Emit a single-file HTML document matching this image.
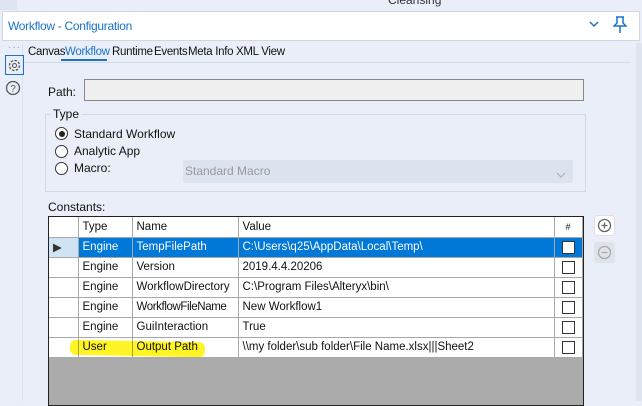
<!DOCTYPE html>
<html><head><style>
*{box-sizing:border-box}
body{margin:0;width:642px;height:401px;overflow:hidden;background:#e9eef8;font-family:"Liberation Sans",sans-serif;font-size:12px;color:#111;position:relative}
.a{position:absolute}
.title{left:2px;top:11px;width:638px;height:30px;background:#fff;border:1px solid #d0d6e2}
.tab{top:46px;font-size:11.5px;letter-spacing:-0.3px}
table{border-collapse:collapse;font-size:11.5px;table-layout:fixed}
td{border:1px solid #a8a8a8;height:20px;padding:0 0 0 4px;white-space:nowrap;overflow:hidden;background:#fff}
.sel td{background:#0078d7;color:#fff}
.cb{display:inline-block;width:13px;height:13px;border:1px solid #333;background:#fff;vertical-align:middle}
.radio{width:13px;height:13px;border:1px solid #333;border-radius:50%;background:#fff}
</style></head><body>
<div class="a" style="left:0;top:0;width:17px;height:10px;background:#dfe5f0"></div>
<div class="a" style="left:388px;top:-7px;font-size:12px;color:#333">Cleansing</div>
<div class="a title"></div>
<div class="a" style="left:8px;top:19px;font-size:12px;letter-spacing:-0.3px;color:#1a73c8">Workflow - Configuration</div>
<svg class="a" style="left:588px;top:20px" width="12" height="10"><path d="M2 2l4 4 4-4" stroke="#1a73c8" stroke-width="1.5" fill="none"/></svg>
<svg class="a" style="left:613px;top:16px" width="14" height="18"><path d="M3 1h8M4 1v6l-3 3h12l-3-3V1M7 10v7" stroke="#1a73c8" stroke-width="1.5" fill="none"/></svg>
<div class="a" style="left:0;top:43px;width:23px;height:358px;background:#e9eef8;border-right:1px solid #dde3ee"></div>
<div class="a" style="left:8px;top:42px;color:#999;font-size:10px;letter-spacing:1px">···</div>
<div class="a" style="left:5px;top:55px;width:19px;height:20px;border:1px solid #1a73c8"></div>
<svg class="a" style="left:7px;top:58px" width="15" height="15"><circle cx="7.5" cy="7.5" r="5" stroke="#555" fill="none" stroke-width="1.3" stroke-dasharray="2.5 1.4"/><circle cx="7.5" cy="7.5" r="2" stroke="#555" fill="none"/></svg>
<svg class="a" style="left:5px;top:80px" width="16" height="16"><circle cx="8" cy="8" r="6.5" stroke="#555" fill="none" stroke-width="1.3"/><text x="8" y="12" font-size="10" text-anchor="middle" fill="#555" font-family="Liberation Sans">?</text></svg>
<div class="a tab" style="left:28px">Canvas</div>
<div class="a tab" style="left:65px;color:#1a73c8">Workflow</div>
<div class="a tab" style="left:112px">Runtime</div>
<div class="a tab" style="left:154px">Events</div>
<div class="a tab" style="left:188px">Meta Info</div>
<div class="a tab" style="left:236px">XML View</div>
<div class="a" style="left:24px;top:62px;width:607px;height:1px;background:#d5dbe6"></div>
<div class="a" style="left:61px;top:59px;width:46px;height:2px;background:#1a73c8"></div>
<div class="a" style="left:48px;top:85px">Path:</div>
<div class="a" style="left:84px;top:79px;width:500px;height:22px;background:#f0f0f0;border:1px solid #888"></div>
<div class="a" style="left:45px;top:114px;width:541px;height:78px;border:1px solid #d5d8de"></div>
<div class="a" style="left:51px;top:107px;background:#e9eef8;padding:0 2px">Type</div>
<div class="a radio" style="left:55px;top:127px"></div><div class="a" style="left:59px;top:131px;width:6px;height:6px;border-radius:50%;background:#222"></div>
<div class="a" style="left:74px;top:127px">Standard Workflow</div>
<div class="a radio" style="left:55px;top:145px"></div><div class="a" style="left:74px;top:144px">Analytic App</div>
<div class="a radio" style="left:55px;top:162px"></div><div class="a" style="left:74px;top:161px">Macro:</div>
<div class="a" style="left:183px;top:160px;width:390px;height:23px;background:#dde3ee;border-radius:2px;color:#999;padding:4px 0 0 2px">Standard Macro</div>
<svg class="a" style="left:556px;top:172px" width="10" height="6"><path d="M1 1l4 4 4-4" stroke="#aaa" fill="none"/></svg>
<div class="a" style="left:48px;top:200px">Constants:</div>
<div class="a" style="left:48px;top:216px;width:536px;height:190px;background:#ababab;border:1px solid #222"></div>
<table class="a" style="left:49px;top:217px;width:533px">
<colgroup><col style="width:29px"><col style="width:54px"><col style="width:106px"><col style="width:316px"><col style="width:28px"></colgroup>
<tr><td style="border-left:0;border-top:0"></td><td style="border-top:0">Type</td><td style="border-top:0">Name</td><td style="border-top:0">Value</td><td style="border-top:0;text-align:center;font-size:9px;padding:0">#</td></tr>
<tr class="sel"><td style="background:#cfe3f5;color:#333;border-left:0">&#9654;</td><td>Engine</td><td>TempFilePath</td><td>C:\Users\q25\AppData\Local\Temp\</td><td style="text-align:center;padding:0"><span class="cb"></span></td></tr>
<tr><td style="border-left:0"></td><td>Engine</td><td>Version</td><td>2019.4.4.20206</td><td style="text-align:center;padding:0"><span class="cb"></span></td></tr>
<tr><td style="border-left:0"></td><td>Engine</td><td>WorkflowDirectory</td><td>C:\Program Files\Alteryx\bin\</td><td style="text-align:center;padding:0"><span class="cb"></span></td></tr>
<tr><td style="border-left:0"></td><td>Engine</td><td style="letter-spacing:-0.4px">WorkflowFileName</td><td>New Workflow1</td><td style="text-align:center;padding:0"><span class="cb"></span></td></tr>
<tr><td style="border-left:0"></td><td>Engine</td><td>GuiInteraction</td><td>True</td><td style="text-align:center;padding:0"><span class="cb"></span></td></tr>
<tr><td style="border-left:0"></td><td>User</td><td>Output Path</td><td>\\my folder\sub folder\File Name.xlsx|||Sheet2</td><td style="text-align:center;padding:0"><span class="cb"></span></td></tr>
</table>
<div class="a" style="left:70px;top:341px;width:135px;height:15px;background:#fff200;opacity:.85;border-radius:6px;mix-blend-mode:multiply;transform:rotate(1deg)"></div>
<div class="a" style="left:594px;top:215px;width:21px;height:21px;background:#fff;border-radius:3px;border:1px solid #dde"></div>
<svg class="a" style="left:597px;top:218px" width="15" height="15"><circle cx="7.5" cy="7.5" r="6" stroke="#666" fill="none" stroke-width="1.3"/><path d="M7.5 4.5v6M4.5 7.5h6" stroke="#666" stroke-width="1.3"/></svg>
<div class="a" style="left:594px;top:242px;width:21px;height:21px;background:#dfe2e8;border-radius:3px"></div>
<svg class="a" style="left:597px;top:245px" width="15" height="15"><circle cx="7.5" cy="7.5" r="6" stroke="#aaa" fill="none" stroke-width="1.3"/><path d="M4.5 7.5h6" stroke="#aaa" stroke-width="1.3"/></svg>
<div class="a" style="left:636px;top:43px;width:6px;height:358px;background:#dfe5f0"></div>
</body></html>
